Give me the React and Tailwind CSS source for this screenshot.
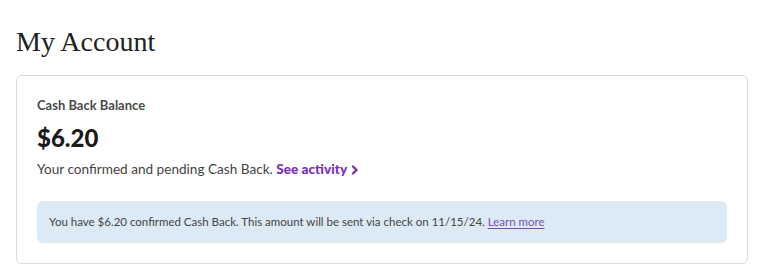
import React from 'react'

const ChevronRight = () => (
  <svg width="8" height="10" viewBox="0 0 8 10" className="inline-block ml-[4px] -mt-[2px]">
    <path d="M2 1.5 L5.5 5 L2 8.5" fill="none" stroke="currentColor" strokeWidth="2.4" strokeLinecap="round" strokeLinejoin="round" />
  </svg>
)

export default function App() {
  return (
    <div className="min-h-[280px] bg-white px-4 pt-[25px] font-['Lato',sans-serif]">
      <h1 className="text-[28px] leading-[34px] text-[#222] font-['Liberation_Serif',serif]">My Account</h1>

      <section className="mt-4 w-[732px] rounded-[6px] border border-[#dcdcdc] px-5 pt-[21px] pb-5">
        <p className="text-[13px] leading-4 font-bold text-[#4a4a4a]">Cash Back Balance</p>
        <p className="mt-[10px] text-[24px] leading-[30px] font-black text-[#1a1a1a]">$6.20</p>
        <p className="mt-[6px] text-[13.6px] leading-5 text-[#444]">
          Your confirmed and pending Cash Back.{' '}
          <a className="font-black text-[#7b2fb5]">
            See activity
            <ChevronRight />
          </a>
        </p>

        <div className="mt-[22px] h-[42px] rounded-[6px] bg-[#dbeaf5] px-3 flex items-center">
          <p className="text-[11.5px] text-[#444]">
            You have $6.20 confirmed Cash Back. This amount will be sent via check on 11/15/24.{' '}
            <a className="text-[#7d4fb5] underline underline-offset-2">Learn more</a>
          </p>
        </div>
      </section>
    </div>
  )
}
